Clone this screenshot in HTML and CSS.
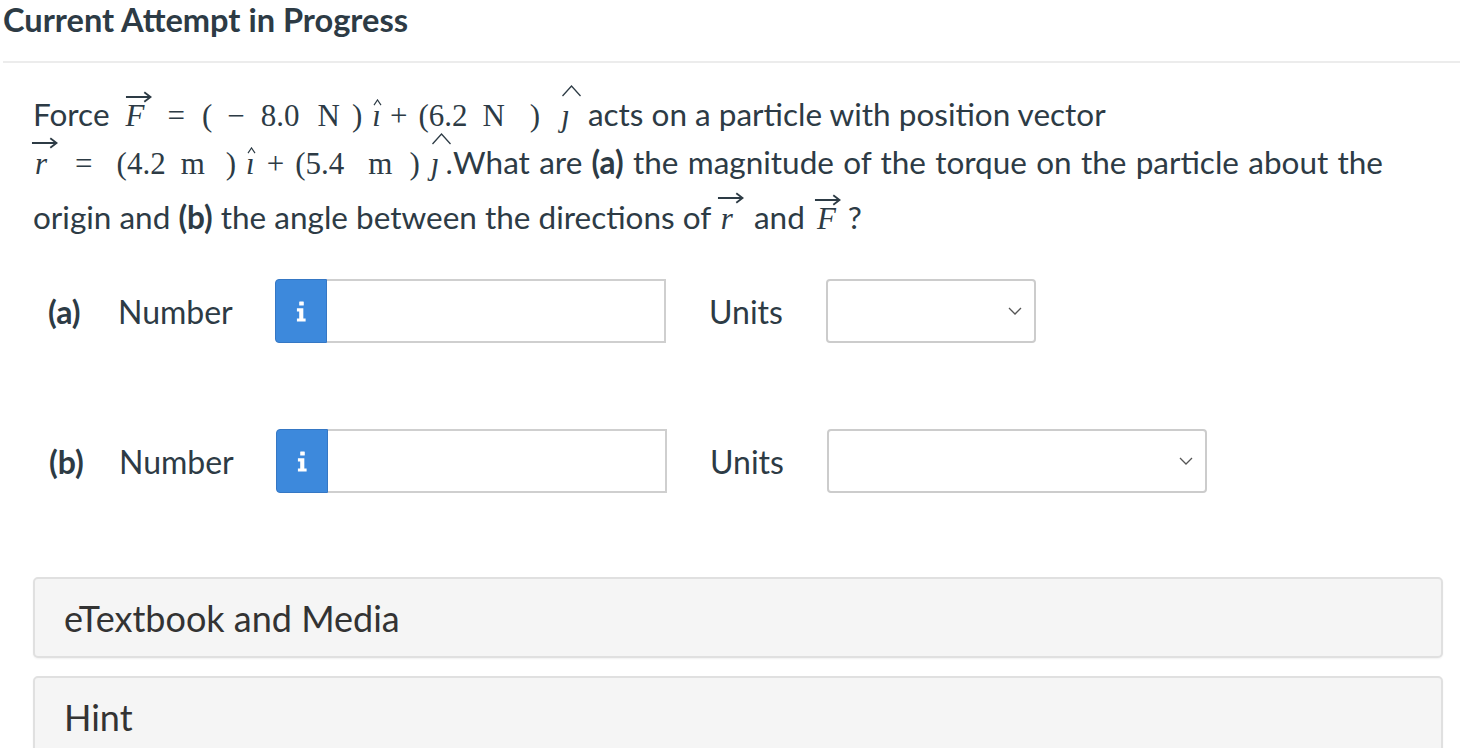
FILE: index.html
```html
<!DOCTYPE html>
<html>
<head>
<meta charset="utf-8">
<link rel="stylesheet" href="styles.css">
</head>
<body>
<div class="page">
  <header class="attempt-header">
    <h1 class="attempt-title">Current Attempt in Progress</h1>
  </header>
  <div class="question">
    <p class="question-text">
      <span class="line">Force <span class="math"><span class="s6"></span><span class="vec">F<svg class="arrow" viewBox="0 0 28 12"><path d="M1 6H26M20 1L26.5 6L20 11" fill="none" stroke="#2d3b45" stroke-width="1.9"/></svg></span><span class="s20"></span>=<span class="s17"></span>(<span class="s15"></span>−<span class="s16"></span>8.0<span class="s18"></span>N<span class="s12"></span>)<span class="s8"></span><span class="hat">ı<svg class="hat-i" viewBox="0 0 10 8"><path d="M1 7L5 1L9 7" fill="none" stroke="#2d3b45" stroke-width="1.3"/></svg></span><span class="s8"></span>+<span class="s11"></span>(6.2<span class="s15"></span>N<span class="s25"></span>)<span class="s18"></span><span class="hat wide first-j">ȷ<svg class="hat-j" viewBox="0 0 20 12"><path d="M1 11L10 1L19 11" fill="none" stroke="#2d3b45" stroke-width="1.3"/></svg></span></span> acts on a particle with position vector</span>
      <span class="line line-wide"><span class="math"><span class="vec r">r<svg class="arrow" viewBox="0 0 28 12"><path d="M1 6H26M20 1L26.5 6L20 11" fill="none" stroke="#2d3b45" stroke-width="1.9"/></svg></span><span class="s25"></span>=<span class="s24"></span>(4.2<span class="s15"></span>m<span class="s21"></span>)<span class="s8"></span><span class="hat">ı<svg class="hat-i" viewBox="0 0 10 8"><path d="M1 7L5 1L9 7" fill="none" stroke="#2d3b45" stroke-width="1.3"/></svg></span><span class="s11"></span>+<span class="s11"></span>(5.4<span class="s24"></span>m<span class="s17"></span>)<span class="s8"></span><span class="hat wide">ȷ<svg class="hat-j" viewBox="0 0 20 12"><path d="M1 11L10 1L19 11" fill="none" stroke="#2d3b45" stroke-width="1.3"/></svg></span>.</span>What are <b>(a)</b> the magnitude of the torque on the particle about the</span>
      <span class="line">origin and <b>(b)</b> the angle between the directions of <span class="math"><span class="vec r inline-r">r<svg class="arrow" viewBox="0 0 28 12"><path d="M1 6H26M20 1L26.5 6L20 11" fill="none" stroke="#2d3b45" stroke-width="1.9"/></svg></span></span> and <span class="math"><span class="vec inline-f">F<svg class="arrow" viewBox="0 0 28 12"><path d="M1 6H26M20 1L26.5 6L20 11" fill="none" stroke="#2d3b45" stroke-width="1.9"/></svg></span></span>?</span>
    </p>

    <div class="answer-row row-a">
      <span class="part-label">(a)</span>
      <span class="field-label">Number</span>
      <span class="info-btn"><svg viewBox="0 0 12 22" class="info-icon"><rect x="3.5" y="0" width="5" height="4.5" rx="0.6" fill="#fff"/><path d="M1 7.5H8V18.5H10.5V22H1V18.5H3.5V11H1Z" fill="#fff"/></svg></span>
      <span class="num-input"></span>
      <span class="units-label">Units</span>
      <span class="units-select narrow"><svg class="chev" viewBox="0 0 14 8"><path d="M1 1L7 7L13 1" fill="none" stroke="#555" stroke-width="1.3"/></svg></span>
    </div>

    <div class="answer-row row-b">
      <span class="part-label">(b)</span>
      <span class="field-label">Number</span>
      <span class="info-btn"><svg viewBox="0 0 12 22" class="info-icon"><rect x="3.5" y="0" width="5" height="4.5" rx="0.6" fill="#fff"/><path d="M1 7.5H8V18.5H10.5V22H1V18.5H3.5V11H1Z" fill="#fff"/></svg></span>
      <span class="num-input"></span>
      <span class="units-label">Units</span>
      <span class="units-select wide-sel"><svg class="chev" viewBox="0 0 14 8"><path d="M1 1L7 7L13 1" fill="none" stroke="#555" stroke-width="1.3"/></svg></span>
    </div>

    <div class="panels">
      <div class="panel">eTextbook and Media</div>
      <div class="panel panel-hint">Hint</div>
    </div>
  </div>
</div>
</body>
</html>
```
FILE: styles.css
```css
html, body {
  margin: 0;
  padding: 0;
  background: #fff;
  overflow: hidden;
}
body {
  font-family: Lato, "Open Sans", sans-serif;
  color: #2d3b45;
}
.page {
  padding-left: 3px;
}
.attempt-header {
  height: 61px;
  border-bottom: 2px solid #ececec;
}
.attempt-title {
  margin: 0;
  padding-top: 2px;
  font-size: 32.6px;
  font-weight: 700;
  line-height: 36px;
  color: #2d3b45;
}
.question {
  padding-left: 30px;
  padding-right: 16px;
}
.question-text {
  margin: 0;
  padding-top: 28px;
  font-size: 31.5px;
  line-height: 46px;
}
.line {
  display: block;
  white-space: nowrap;
}
.line-wide {
  word-spacing: 1.2px;
}
.line:nth-child(3) {
  margin-top: 7px;
}
.math {
  font-family: "Liberation Serif", "Times New Roman", serif;
  font-size: 31px;
  white-space: nowrap;
  word-spacing: 0;
}
.math span[class^="s"] {
  display: inline-block;
}
.s6 { width: 6px; }
.s8 { width: 8px; }
.s11 { width: 11px; }
.s12 { width: 12px; }
.s15 { width: 15px; }
.s16 { width: 16px; }
.s17 { width: 17px; }
.s18 { width: 18px; }
.s20 { width: 20px; }
.s21 { width: 21px; }
.s24 { width: 24px; }
.s25 { width: 25px; }
.vec {
  position: relative;
  display: inline-block;
  font-style: italic;
  padding: 0 3px 0 2px;
}
.vec .arrow {
  position: absolute;
  left: 1px;
  top: -2px;
  width: 27px;
  height: 12px;
}
.vec.r .arrow {
  left: -2px;
  top: -4px;
}
.vec.inline-r {
  padding-right: 13px;
}
.vec.inline-f {
  padding-left: 4px;
  padding-right: 12px;
}
.hat {
  position: relative;
  display: inline-block;
  font-style: italic;
  padding: 0 1px 0 2px;
}
.hat-i {
  position: absolute;
  left: 3px;
  top: 6px;
  width: 9px;
  height: 7px;
}
.hat.wide {
  padding: 0 6px 0 3px;
}
.hat.first-j {
  padding-right: 10px;
}
.hat-j {
  position: absolute;
  left: 3px;
  top: -8px;
  width: 21px;
  height: 12px;
}
.answer-row {
  display: flex;
  align-items: center;
  height: 64px;
  padding-left: 15px;
  font-size: 32px;
}
.row-a {
  margin-top: 37px;
}
.row-b {
  margin-top: 86px;
  padding-left: 16px;
}
.part-label {
  width: 70px;
  font-weight: 700;
}
.field-label {
  width: 157px;
}
.info-btn {
  width: 52px;
  height: 64px;
  box-sizing: border-box;
  background: #3d89dc;
  border: 1px solid #3577c4;
  border-radius: 4px 0 0 4px;
  display: flex;
  align-items: center;
  justify-content: center;
}
.info-icon {
  width: 11px;
  height: 21px;
}
.num-input {
  width: 339px;
  height: 64px;
  box-sizing: border-box;
  border: 2px solid #cfcfcf;
  border-left: none;
  background: #fff;
}
.units-label {
  margin-left: 43px;
  width: 117px;
}
.units-select {
  height: 64px;
  box-sizing: border-box;
  border: 2px solid #cccccc;
  border-radius: 4px;
  display: flex;
  align-items: center;
  justify-content: flex-end;
  padding-right: 12px;
}
.units-select.narrow { width: 210px; }
.units-select.wide-sel { width: 380px; }
.chev {
  width: 14px;
  height: 8px;
}
.panels {
  margin-top: 84px;
  width: 1410px;
  display: flex;
  flex-direction: column;
  gap: 18px;
}
.panel {
  height: 81px;
  box-sizing: border-box;
  background: #f5f5f5;
  border: 2px solid #e0e0e0;
  border-radius: 5px;
  padding-left: 29px;
  display: flex;
  align-items: center;
  font-size: 36px;
  color: #333;
  box-shadow: 0 1px 2px rgba(0,0,0,0.06);
}
.panel-hint {
  height: 90px;
  align-items: flex-start;
  padding-top: 17px;
}
```
